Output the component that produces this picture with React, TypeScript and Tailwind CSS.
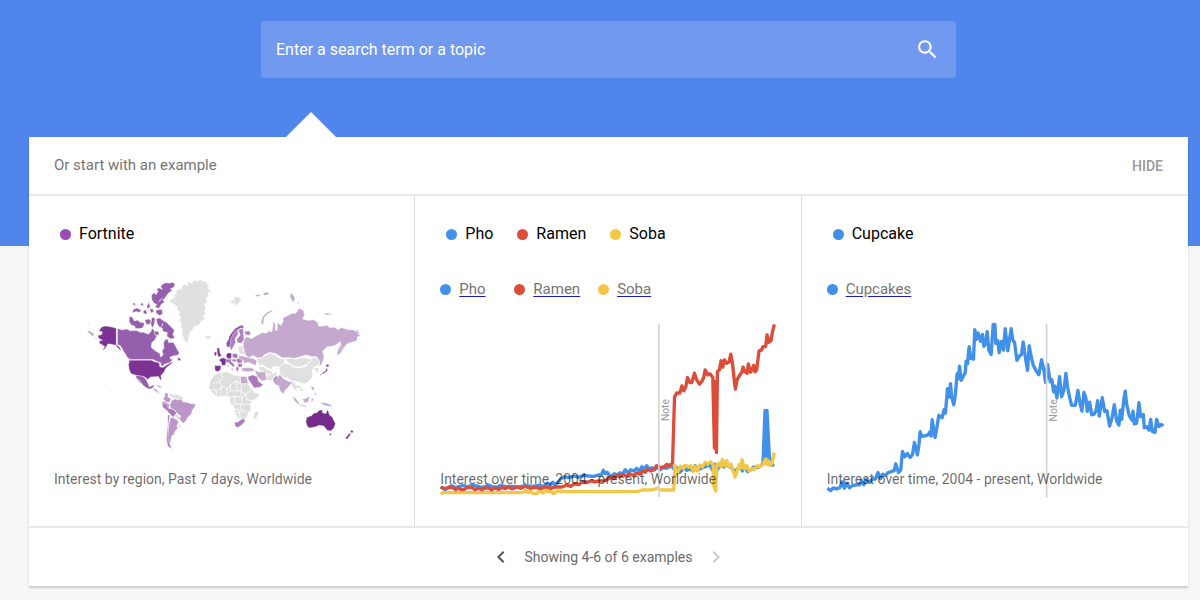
import type { ReactNode } from 'react';

type Series = { color: string; points: string };
type Term = { label: string; dot: string };

const BLUE = '#4190ea';
const RED = '#dd4b39';
const YELLOW = '#f3c746';

const soupSeries: Series[] = [
  {
    color: BLUE,
    points:
      '35,531 48,540 58,533 68,528 80,534 92,530 104,527 116,532 128,527 142,529 156,533 170,531 178,526 190,531 205,532 216,527 230,531 250,530 270,532 290,528 310,530 330,527 346,530 356,521 364,527 372,518 378,525 388,518 396,507 408,501 420,504 436,499 450,503 464,497 480,499 496,500 508,496 518,496 524,482 530,492 536,488 542,497 550,500 557,492 565,497 574,489 582,493 590,480 598,490 606,480 616,484 624,476 632,484 640,471 646,480 654,468 662,478 670,474 678,480 686,473 696,480 704,472 712,476 722,472 730,470 738,480 746,474 754,488 762,480 768,470 774,482 784,478 794,484 800,468 808,480 820,475 832,470 844,466 852,480 860,464 868,478 880,459 888,472 896,465 908,474 918,484 926,480 936,466 942,484 950,470 958,486 968,480 976,472 986,474 998,468 1004,460 1010,302 1013,460 1016,302 1023,440 1028,458 1036,470',
  },
  {
    color: YELLOW,
    points:
      '35,553 42,549 60,549 100,549 150,549 200,549 280,549 290,543 298,549 304,544 312,551 324,551 332,542 342,550 350,543 358,546 366,544 374,552 386,544 400,546 440,546 500,546 560,546 630,545 640,541 670,541 688,535 696,541 720,541 736,541 739,467 744,495 750,482 756,470 764,476 772,467 780,472 787,468 794,486 800,470 806,484 814,466 822,472 830,458 838,464 846,456 854,464 856,528 862,545 865,468 872,460 878,472 882,449 890,470 895,453 902,472 908,464 914,483 920,502 928,480 933,464 938,475 941,450 948,478 955,468 962,484 970,476 978,480 986,468 994,472 1004,464 1012,448 1016,465 1022,455 1026,468 1032,458 1038,429',
  },
  {
    color: RED,
    points:
      '35,533 50,537 60,534 72,534 80,540 88,535 96,540 106,539 114,534 130,534 138,540 148,536 160,540 168,535 180,535 188,541 196,535 210,539 218,533 230,537 238,532 250,538 264,532 276,536 290,530 304,536 320,533 336,537 350,532 366,536 380,532 400,532 414,526 426,530 438,522 450,525 460,517 474,519 486,514 498,517 510,514 528,513 540,507 549,500 556,506 566,496 574,501 584,494 594,500 604,492 616,498 624,490 634,494 642,484 650,488 658,478 666,484 676,480 684,468 694,472 704,474 714,464 722,468 732,460 738,262 745,249 754,250 760,228 766,243 772,230 777,203 784,218 790,218 798,190 805,211 813,223 820,215 826,202 830,180 838,195 845,192 853,203 858,415 860,215 864,428 867,185 873,180 878,152 883,172 888,150 895,160 902,156 907,133 912,158 918,215 921,238 926,210 934,196 940,188 944,172 950,186 956,190 960,162 966,187 971,180 976,166 980,186 985,180 992,123 1000,120 1004,110 1012,110 1016,75 1022,97 1028,92 1032,68 1038,43',
  },
];

const cakeSeries: Series[] = [
  {
    color: BLUE,
    points:
      '36,534 46,541 54,533 64,536 74,532 80,515 87,534 95,519 102,533 112,526 124,524 132,524 139,512 145,524 153,507 163,516 172,506 180,507 188,487 195,506 202,492 210,496 217,488 228,484 236,482 241,461 249,487 256,480 261,424 268,440 276,430 284,442 291,434 297,397 306,434 311,400 314,365 319,379 328,377 338,374 344,365 347,378 350,329 359,382 363,360 370,316 380,323 386,299 390,309 396,236 402,261 405,221 409,262 415,284 420,250 425,191 429,206 432,168 437,211 444,197 449,189 452,153 456,161 461,110 466,145 474,147 478,59 483,88 488,69 495,94 501,73 505,109 510,102 515,65 520,121 527,133 533,44 538,43 541,100 547,92 551,128 558,94 564,120 569,56 577,122 580,100 587,56 592,91 597,97 604,151 611,139 618,133 623,96 630,145 636,181 641,107 647,140 653,165 661,181 670,194 678,149 685,180 690,217 696,163 704,215 709,209 714,245 718,228 724,264 732,200 738,260 745,240 751,190 756,230 762,261 768,285 779,286 787,241 793,278 799,303 805,247 811,264 815,304 822,276 828,314 836,312 842,299 846,272 851,318 860,263 867,304 874,302 882,348 889,324 896,284 903,332 910,345 914,300 918,328 925,265 929,243 933,282 941,317 949,330 952,303 956,341 963,339 970,278 975,320 983,313 986,353 994,350 1000,360 1005,328 1010,364 1018,367 1023,328 1030,349 1038,343 1042,348',
  },
];

const mapShapes: { fill: string; d: string }[] = [
  // Greenland, Svalbard and Iceland
  { fill: '#e0e0e0', d: 'M268,95 L278,86 285,82 281,75 291,72 288,65 297,57 306,56 309,46 319,45 325,49 323,38 333,36 336,43 343,31 353,34 361,29 373,35 384,37 382,44 390,47 382,54 397,64 384,67 387,78 380,84 382,97 373,103 379,113 374,122 379,132 369,139 376,147 365,153 357,166 344,170 338,180 330,187 327,206 324,218 317,216 311,206 306,188 309,179 303,171 306,160 300,152 302,140 296,134 301,126 293,121 291,109 283,103Z M378,199 L388,197 394,202 388,208 377,205Z M451,95 L460,89 466,96 461,103Z M463,82 L477,80 485,91 474,101 468,110 464,100Z' },
  // Canadian mainland
  { fill: '#965fae', d: 'M113,175 L126,180 141,177 151,183 170,182 180,187 191,187 205,193 214,185 216,174 225,184 224,194 231,198 226,209 216,218 214,232 221,239 233,247 239,250 243,262 250,255 247,242 253,235 251,221 256,209 264,208 267,219 280,217 286,226 292,238 299,250 293,256 281,258 270,262 274,269 281,268 270,278 253,283 249,290 245,287 242,278 230,274 221,269 151,269 142,262 137,253 129,241 122,228 113,224Z' },
  // Arctic islands
  { fill: '#965fae', d: 'M248,43 L258,38 269,40 277,37 286,42 282,52 271,57 278,61 265,70 257,82 249,91 254,97 245,102 237,116 226,111 231,103 222,99 216,89 215,76 224,68 228,75 235,64 230,57 239,54 248,59 243,50Z M149,139 L158,142 163,153 173,151 182,157 194,159 190,173 181,176 167,176 165,169 154,165 148,155Z M195,150 L207,147 214,154 209,164 199,162Z M216,142 L226,145 223,163 218,174 213,162Z M229,147 L240,144 248,151 261,158 272,169 284,181 279,193 285,205 272,207 261,199 263,188 250,185 247,174 239,171 233,163Z M160,119 L171,114 184,120 180,127 168,125 158,129Z M189,126 L196,119 202,127 197,134Z M210,116 L220,118 222,125 213,129Z M229,120 L247,119 248,132 239,137 229,129Z M181,105 L188,97 191,108Z M201,110 L207,97 211,110 205,117Z M157,103 L165,98 167,107Z M223,185 L235,184 238,194 226,196Z M293,263 L302,265 304,272 294,272Z' },
  // Alaska and contiguous states
  { fill: '#7c3393', d: 'M64,172 L76,168 87,170 98,172 109,175 109,224 118,231 125,245 116,237 108,226 94,223 84,222 76,236 66,243 75,231 69,226 58,220 59,213 68,211 56,205 54,197 66,194 67,186 57,184Z M149,271 L214,271 224,276 238,279 240,291 250,293 259,287 277,276 278,279 258,295 253,306 243,318 246,333 240,328 236,320 223,321 212,322 204,329 195,322 185,319 174,318 154,312 148,300 146,284Z' },
  // Bering Sea islands and Hawaii
  { fill: '#c5a8ce', d: 'M23,181 L31,184 44,194 38,199 30,192 24,187Z M42,203 L47,205 44,208Z M23,163 L28,164 26,167Z M71,346 L76,345 74,348Z' },
  // Mexico and Central America
  { fill: '#965fae', d: 'M166,317 L177,318 189,320 199,329 204,340 209,352 217,347 223,347 220,354 211,358 203,356 191,348 184,339 176,327 185,342 181,340 172,328Z' },
  { fill: '#c09cca', d: 'M218,356 L228,358 235,366 240,373 232,368 224,362Z M228,345 L240,348 247,355 238,353Z' },
  // South America
  { fill: '#e0e0e0', d: 'M265,371 L276,373 291,374 307,380 311,387 297,390 282,386 272,382Z M284,437 L293,433 301,444 302,452 292,450Z M297,463 L305,468 303,475 297,472Z' },
  { fill: '#bc96c8', d: 'M256,369 L265,371 264,382 274,387 270,397 261,398 250,388 255,380Z M248,393 L260,399 270,403 266,413 274,421 268,430 257,418 247,405Z M275,393 L285,388 296,391 305,388 309,397 325,398 335,403 345,401 347,409 338,421 334,434 323,444 318,455 310,461 299,449 303,439 291,430 285,421 275,417 270,408Z' },
  { fill: '#aa78bb', d: 'M247,402 L258,402 267,417 275,417 285,422 290,431 280,443 271,433 260,421 250,413Z M264,436 L270,436 266,465 265,501 272,527 276,539 264,528 260,505 264,469Z' },
  { fill: '#bc96c8', d: 'M273,443 L282,445 292,452 297,456 291,468 294,476 287,483 283,493 276,498 274,507 270,526 264,506 267,467Z' },
  // Russia
  { fill: '#c5a8ce', d: 'M493,207 L504,201 515,207 532,197 547,189 560,190 570,183 577,187 581,163 580,153 587,162 587,182 594,181 593,157 604,167 611,155 610,144 622,138 636,131 649,130 659,115 672,122 675,135 669,147 688,152 701,149 715,158 716,168 732,169 742,166 751,173 766,172 776,180 785,173 804,179 823,180 832,187 843,198 834,201 832,213 813,218 803,222 792,236 784,251 773,254 776,237 785,223 783,215 765,228 743,231 729,244 734,260 728,281 719,290 721,274 711,260 695,260 680,255 665,260 646,265 624,263 607,264 590,252 570,247 555,254 546,263 533,264 520,257 507,264 494,251 494,239 490,231Z M544,158 L549,141 562,128 577,121 578,125 564,132 553,144 551,165Z M632,69 L639,73 647,86 641,98 632,82Z M652,96 L658,97 658,104Z M730,129 L747,130 760,133 742,135Z M527,75 L544,74 540,79 529,80Z M549,72 L560,66 570,72 557,77Z' },
  // Scandinavia and Baltic
  { fill: '#8b4ca2', d: 'M440,219 L447,209 449,199 457,187 467,176 480,168 489,165 493,174 482,174 469,185 462,199 454,215 449,233 441,230Z' },
  { fill: '#ad80bf', d: 'M454,205 L464,185 474,179 475,193 466,208 468,218 460,233 455,242 450,231Z M476,180 L490,174 493,208 485,220 474,219 471,209 482,195Z M493,186 L508,183 514,192 506,197 498,193Z' },
  { fill: '#e0e0e0', d: 'M475,230 L492,228 491,241 499,252 482,253 476,243Z' },
  // Europe
  { fill: '#7c3393', d: 'M412,234 L419,235 421,250 426,257 417,262 413,252Z M404,247 L411,246 410,258 404,258Z M422,267 L431,264 440,268 439,278 437,286 427,287 425,277 418,271Z M405,287 L424,288 423,299 414,306 406,302Z M440,253 L447,249 456,251 455,266 444,267 440,260Z' },
  { fill: '#aa78bb', d: 'M458,252 L473,251 474,265 459,264Z M439,268 L456,268 454,274 466,286 461,292 447,278 439,278Z M456,268 L470,268 468,276 459,275Z M472,266 L486,267 488,278 477,280 470,275Z M474,282 L488,282 487,291 476,292Z M470,289 L478,294 474,306 469,300Z M453,297 L462,297 458,301Z M443,287 L447,286 446,295Z' },
  { fill: '#c5a8ce', d: 'M478,257 L495,260 508,264 523,267 532,274 527,287 516,281 505,277 496,280 489,271 478,266Z M486,296 L499,293 514,294 524,298 522,304 505,306 489,304Z' },
  // Central and east Asia
  { fill: '#e0e0e0', d: 'M531,267 L546,264 558,257 570,250 590,257 601,266 617,269 613,280 604,291 591,291 582,289 575,299 560,293 550,285 539,287Z M617,269 L633,265 649,268 667,263 681,265 696,270 682,283 663,291 643,289 629,280Z M538,291 L550,290 562,299 577,304 578,313 560,314 552,305 541,303Z M599,292 L615,281 628,282 641,292 662,295 681,289 693,274 698,263 711,264 721,275 715,288 704,290 697,302 700,319 691,332 677,342 667,341 652,335 637,333 624,325 612,323 601,310Z M560,319 L577,312 593,307 587,318 577,332 562,331Z M632,336 L643,335 650,346 662,349 672,366 662,364 661,355 651,354 653,369 645,358 638,352Z M703,295 L714,292 719,307 712,308Z' },
  // Middle East and India
  { fill: '#c5a8ce', d: 'M525,301 L539,307 557,306 561,331 546,333 534,322Z M580,334 L592,323 602,314 611,326 627,335 638,337 630,348 618,360 611,373 602,363 597,347 587,344Z M482,320 L500,320 506,341 484,342Z' },
  { fill: '#aa78bb', d: 'M507,319 L520,316 533,321 537,335 551,345 542,352 524,355 513,339 505,326Z M580,330 L592,315 593,324 583,335Z' },
  // Africa
  { fill: '#dedede', d: 'M388,350 L394,330 408,313 424,309 441,306 451,311 466,317 481,319 483,343 506,343 516,359 528,370 540,371 535,383 518,393 511,403 514,419 506,429 501,442 491,452 479,449 473,443 466,427 463,409 452,401 451,383 440,377 422,381 410,380 398,370 389,358Z M526,426 L534,423 536,433 528,449 521,448Z' },
  { fill: '#aa78bb', d: 'M465,457 L474,458 484,450 494,447 496,455 485,467 473,474 466,468Z' },
  // Japan, Kamchatka and south-east Asia
  { fill: '#7c3393', d: 'M740,284 L749,284 747,291 739,290Z M743,292 L744,303 732,312 724,313 737,304Z M722,312 L726,314 723,318Z' },
  { fill: '#c5a8ce', d: 'M780,237 L787,226 788,238 779,252 774,258 773,247Z M826,178 L834,182 842,192 834,190Z M639,380 L647,384 661,403 657,405 646,394Z M669,388 L680,386 690,378 687,396 675,399Z M661,405 L682,409 678,412 663,409Z M695,386 L703,386 697,399Z M694,349 L702,351 705,359 699,362Z M704,367 L711,372 708,378Z M721,398 L737,399 753,404 760,411 745,409 733,406Z' },
  // Australia and New Zealand
  { fill: '#762a8c', d: 'M682,443 L696,438 704,430 713,429 718,422 728,420 729,429 739,432 745,419 750,436 758,442 763,452 768,462 763,476 753,484 743,482 733,469 719,467 706,472 690,475 683,469 679,456Z M748,492 L756,491 753,499Z M815,481 L822,484 819,490 813,488Z M811,490 L814,494 804,508 797,507Z' },
];

const borderLines = [
  'M400,341 L418,337 430,323 425,310 M418,337 L430,350 442,359 453,344 470,334 483,342 M430,350 L413,361 392,359 M442,359 L444,377 M453,344 L450,365 468,362 483,365 487,384 M470,334 L473,359 M451,383 L466,379 487,384 499,373 516,360 M466,379 L464,402 482,403 486,420 463,420 M487,384 L487,404 510,403 M486,420 L501,427 M479,428 L482,448 M499,373 L500,390 518,393 M486,343 L484,365 M408,361 L411,379 M425,350 L423,380 M470,427 L490,428 M483,365 L501,373',
  'M236,95 L248,85 M250,160 L245,170',
];

function TrendChart({ series, noteX, title, viewBox }: { series: Series[]; noteX: number; title: string; viewBox: string }) {
  return (
    <svg viewBox={viewBox} role="img" aria-label={title} className="block h-auto w-full overflow-visible">
      {series.map((s) => (
        <polyline key={s.color} points={s.points} fill="none" stroke={s.color} strokeWidth="10" strokeLinejoin="round" />
      ))}
      <path d={`M${noteX},42 V562`} stroke="#d4d4d4" strokeWidth="5" />
      <text transform={`translate(${noteX + 31} 334) rotate(-90)`} fontSize="31" fill="#999999">
        Note
      </text>
    </svg>
  );
}

function WorldMap() {
  return (
    <svg viewBox="-78 0 1008 570" role="img" aria-label="Interest by region" className="block h-auto w-full">
      {mapShapes.map((s) => (
        <path key={s.d} d={s.d} fill={s.fill} stroke="#ffffff" strokeWidth="1" strokeLinejoin="round" />
      ))}
      {borderLines.map((d) => (
        <path key={d} d={d} fill="none" stroke="#ffffff" strokeWidth="2.5" />
      ))}
    </svg>
  );
}

function Dot({ color }: { color: string }) {
  return <span className={`size-[11px] shrink-0 rounded-full ${color}`} />;
}

function ExampleCard({ terms, links, caption, children }: { terms: Term[]; links?: Term[]; caption: string; children: ReactNode }) {
  return (
    <article className="min-w-0 border-[#dedede] px-[25px] pt-[26px] pb-[37px] not-last:border-r">
      <h2 className="flex gap-6 pl-[6px] text-base leading-6 text-black">
        {terms.map((t) => (
          <span key={t.label} className="flex items-center gap-2">
            <Dot color={t.dot} />
            {t.label}
          </span>
        ))}
      </h2>
      <div className="mt-[31px] flex h-6">
        {links?.map((t) => (
          <span key={t.label} className="flex min-w-[74px] items-center gap-2 pr-[18px]">
            <Dot color={t.dot} />
            <a href="#explore" className="text-[15px] leading-6 text-[#757575] underline decoration-[#1a1acc] underline-offset-2">
              {t.label}
            </a>
          </span>
        ))}
      </div>
      <div className={links ? 'mt-[9px]' : '-mt-[31px] mb-10'}>{children}</div>
      <p className="relative -mt-[31px] text-sm leading-5 whitespace-nowrap text-black/60">{caption}</p>
    </article>
  );
}

export default function App() {
  return (
    <div className="min-h-screen bg-[#f6f6f6] bg-linear-to-b from-[#5085ec] from-[246px] to-[#f6f6f6] to-[246px] pr-3 pb-[14px] pl-[29px] font-['Roboto',sans-serif]">
      <header className="pt-[21px]">
        <form className="mx-auto flex h-[57px] max-w-[695px] items-center rounded bg-[#7099ef] pr-4 pl-[15px]" onSubmit={(e) => e.preventDefault()}>
          <input
            type="text"
            aria-label="Enter a search term or a topic"
            placeholder="Enter a search term or a topic"
            className="min-w-0 flex-1 bg-transparent text-base text-white outline-none placeholder:text-white"
          />
          <button type="submit" aria-label="Search">
            <svg viewBox="0 0 24 24" className="size-[25px] fill-white">
              <path d="M15.5 14h-.79l-.28-.27A6.47 6.47 0 0 0 16 9.5 6.5 6.5 0 1 0 9.5 16c1.61 0 3.09-.59 4.23-1.57l.27.28v.79l5 4.99L20.49 19l-4.99-5zm-6 0C7.01 14 5 11.99 5 9.5S7.01 5 9.5 5 14 7.01 14 9.5 11.99 14 9.5 14z" />
            </svg>
          </button>
        </form>
      </header>

      <main className="relative mt-[59px] bg-white shadow-[0_2px_2px_rgba(0,0,0,0.18)]">
        <span className="absolute bottom-full left-[257px] h-[25px] w-[50px] bg-white [clip-path:polygon(50%_0,100%_100%,0_100%)]" />
        <div className="flex h-[57px] items-center justify-between px-[25px]">
          <h1 className="text-[15px] text-[#757575]">Or start with an example</h1>
          <button type="button" className="text-sm font-medium text-[#999999]">
            HIDE
          </button>
        </div>
        <section className="grid grid-cols-3 border-y-2 border-[#e8e8e8]">
          <ExampleCard terms={[{ label: 'Fortnite', dot: 'bg-[#9c4ab4]' }]} caption="Interest by region, Past 7 days, Worldwide">
            <WorldMap />
          </ExampleCard>
          <ExampleCard
            terms={[
              { label: 'Pho', dot: 'bg-[#4190ea]' },
              { label: 'Ramen', dot: 'bg-[#dd4b39]' },
              { label: 'Soba', dot: 'bg-[#f3c746]' },
            ]}
            links={[
              { label: 'Pho', dot: 'bg-[#4190ea]' },
              { label: 'Ramen', dot: 'bg-[#dd4b39]' },
              { label: 'Soba', dot: 'bg-[#f3c746]' },
            ]}
            caption="Interest over time, 2004 - present, Worldwide"
          >
            <TrendChart series={soupSeries} noteX={691} title="Pho, Ramen and Soba" viewBox="33 0 1008 570" />
          </ExampleCard>
          <ExampleCard
            terms={[{ label: 'Cupcake', dot: 'bg-[#4190ea]' }]}
            links={[{ label: 'Cupcakes', dot: 'bg-[#4190ea]' }]}
            caption="Interest over time, 2004 - present, Worldwide"
          >
            <TrendChart series={cakeSeries} noteX={693} title="Cupcake" viewBox="35 0 1008 570" />
          </ExampleCard>
        </section>
        <nav aria-label="Examples" className="flex h-[58px] items-center justify-center gap-3 text-sm text-[#6b6b6b]">
          <button type="button" aria-label="Previous examples">
            <svg viewBox="0 0 24 24" className="size-6 fill-[#555555]">
              <path d="M15.41 7.41 14 6l-6 6 6 6 1.41-1.41L10.83 12z" />
            </svg>
          </button>
          <span>Showing 4-6 of 6 examples</span>
          <button type="button" aria-label="Next examples" disabled>
            <svg viewBox="0 0 24 24" className="size-6 fill-[#cccccc]">
              <path d="M8.59 16.59 10 18l6-6-6-6-1.41 1.41L13.17 12z" />
            </svg>
          </button>
        </nav>
      </main>
    </div>
  );
}
